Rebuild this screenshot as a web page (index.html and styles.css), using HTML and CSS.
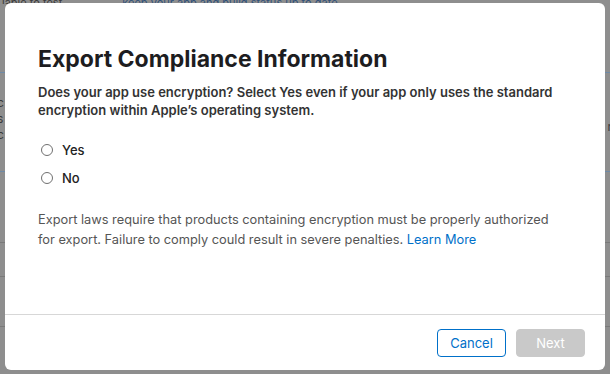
FILE: index.html
```html
<!DOCTYPE html>
<html lang="en">
<head>
<meta charset="utf-8">
<title>Export Compliance Information</title>
<link rel="stylesheet" href="styles.css">
</head>
<body>
<div class="page">
  <div class="page-top">
    <span class="pt-text">lable to test</span><span class="pt-link">keep your app and build status up to date</span>
  </div>
  <div class="page-row row-a">
    <div class="edge-col"><span>c</span><span>s</span><span>c</span></div>
    <div class="edge-col edge-right"><span>&nbsp;</span><span>r</span></div>
  </div>
  <div class="page-row row-c"></div>
  <div class="page-row row-d"></div>
  <div class="page-row row-e"></div>
</div>

<div class="modal" role="dialog" aria-labelledby="title">
  <div class="modal-body">
    <h1 id="title" class="modal-title">Export Compliance Information</h1>
    <p class="question">Does your app use encryption? Select Yes even if your app only uses the standard encryption within Apple’s operating system.</p>
    <div class="options">
      <label class="option"><span class="radio"></span><span class="option-label">Yes</span></label>
      <label class="option"><span class="radio"></span><span class="option-label">No</span></label>
    </div>
    <p class="note">Export laws require that products containing encryption must be properly authorized for export. Failure to comply could result in severe penalties. <a class="link" href="#">Learn More</a></p>
  </div>
  <div class="modal-footer">
    <button class="btn btn-cancel" type="button">Cancel</button>
    <button class="btn btn-next" type="button" disabled>Next</button>
  </div>
</div>
</body>
</html>
```
FILE: styles.css
```css
html, body {
  margin: 0;
  padding: 0;
}
body {
  width: 610px;
  height: 374px;
  overflow: hidden;
  background: #8e8e8e;
  font-family: Inter, "Noto Sans", "Liberation Sans", sans-serif;
  position: relative;
}

/* dimmed page behind the dialog */
.page {
  display: flex;
  flex-direction: column;
}
.page-top {
  height: 4px;
  overflow: hidden;
  font-size: 11px;
  line-height: 6px;
  padding-left: 2px;
  color: #3a3a3a;
}
.pt-link { color: #30517a; margin-left: 60px; }
.page-row {
  display: flex;
  justify-content: space-between;
  font-size: 12px;
  color: #3a3a3a;
  box-sizing: border-box;
}
.row-a {
  margin-top: 68px;
  height: 100px;
  border-top: 1px solid #6f8aa6;
  border-bottom: 1px solid #6f8aa6;
  padding-top: 22px;
}
.edge-col {
  display: flex;
  flex-direction: column;
  line-height: 16px;
  margin-left: -3px;
}
.edge-right { margin-left: 0; margin-right: -2px; padding-top: 8px; }
.row-c { margin-top: 70px; height: 34px; border-top: 1px solid #7a7a7a; }
.row-d { height: 50px; border-top: 1px solid #7a7a7a; }
.row-e { border-top: 1px solid #7a7a7a; }

/* dialog */
.modal {
  position: absolute;
  left: 5px;
  top: 3px;
  width: 600px;
  height: 367px;
  background: #fff;
  border-radius: 6px;
  display: flex;
  flex-direction: column;
  box-sizing: border-box;
}
.modal-body {
  flex: 1;
  padding: 41px 33px 0;
}
.modal-title {
  margin: 0;
  font-size: 23px;
  line-height: 30px;
  font-weight: 700;
  color: #1d1d1f;
}
.question {
  margin: 9px 0 0;
  font-size: 13px;
  line-height: 18px;
  font-weight: 600;
  color: #333;
}
.options {
  margin-top: 22px;
  display: flex;
  flex-direction: column;
  gap: 10px;
  padding-left: 3px;
}
.option {
  display: flex;
  align-items: center;
  gap: 9px;
  height: 18px;
  font-size: 13px;
  font-weight: 500;
  color: #222;
}
.radio {
  width: 12px;
  height: 12px;
  border: 1px solid #707070;
  border-radius: 50%;
  box-sizing: border-box;
  background: #fff;
}
.note {
  margin: 23px 0 0;
  max-width: 522px;
  font-size: 12.8px;
  line-height: 20px;
  color: #555;
}
.link {
  color: #0070c9;
  text-decoration: none;
}
.modal-footer {
  border-top: 1px solid #d7d7d7;
  display: flex;
  justify-content: flex-end;
  gap: 10px;
  padding: 14px 20px 13px;
}
.btn {
  width: 69px;
  height: 28px;
  border-radius: 4px;
  font-family: inherit;
  font-size: 13px;
  padding: 0;
  box-sizing: border-box;
}
.btn-cancel {
  background: #fff;
  border: 1px solid #0070c9;
  color: #0070c9;
}
.btn-next {
  background: #c9c9c9;
  border: 1px solid #c9c9c9;
  color: #fff;
}
```
